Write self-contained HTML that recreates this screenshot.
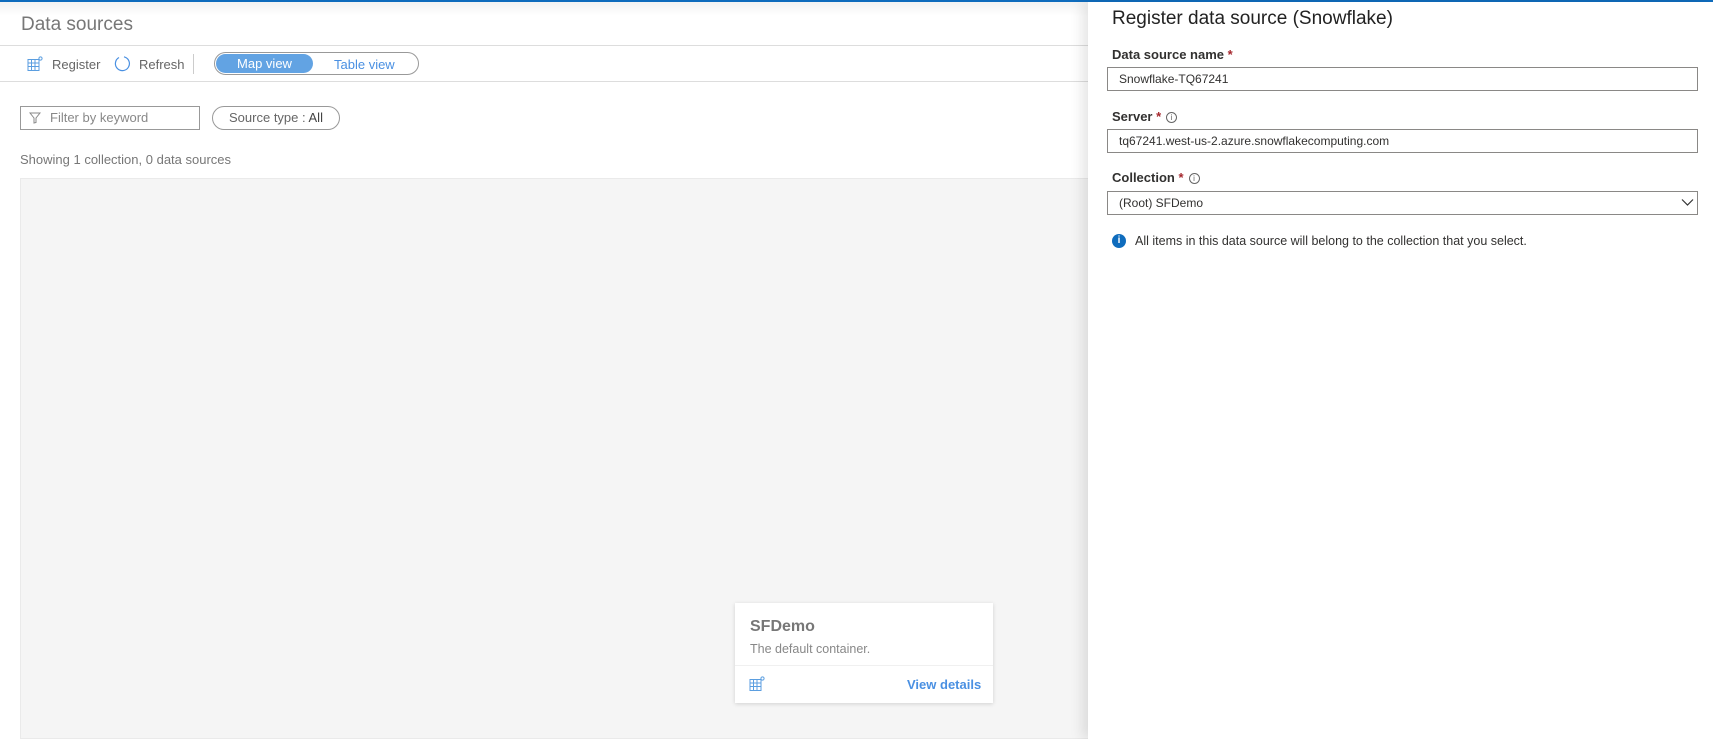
<!DOCTYPE html>
<html><head><style>
*{box-sizing:border-box;margin:0;padding:0}
body{width:1713px;height:739px;overflow:hidden;background:#fff;font-family:"Liberation Sans",sans-serif;position:relative;color:#323130}
.a{position:absolute}
.topbar{left:0;top:0;width:1713px;height:2px;background:#0f6cbd}
.hdrline{left:0;width:1088px;height:1px;background:#ddd}
.inp{border:1px solid #8a8886;height:24px;font-size:12px;padding-left:11px;line-height:22px;color:#323130;left:1107px;width:591px;background:#fff}
.lbl{left:1112px;font-size:13px;font-weight:bold;color:#323130}
.lbl b{color:#a4262c}
.inf{display:inline-block;width:11px;height:11px;border:1px solid #666;border-radius:50%;font-size:8px;line-height:9px;text-align:center;font-weight:normal;margin-left:5px;vertical-align:1px;color:#666}
</style></head><body>
<div class="a topbar"></div>
<div class="a" style="left:0;top:2px;width:1088px;height:14px;background:linear-gradient(#f3f3f3,#fff)"></div>
<div class="a" style="left:21px;top:14px;font-size:19px;color:#777">Data sources</div>
<div class="a hdrline" style="top:45px"></div>
<div class="a hdrline" style="top:81px"></div>
<svg class="a" style="left:27px;top:56px" width="16" height="16" viewBox="0 0 16 16" fill="none" stroke="#5b9ee0" stroke-width="1"><rect x="1" y="3.5" width="11" height="11"/><path d="M4.5 3.5v11M8 3.5v11M1 7h11M1 10.5h11"/><circle cx="13.5" cy="2.5" r="1.6"/></svg>
<div class="a" style="left:52px;top:57px;font-size:13px;color:#666">Register</div>
<svg class="a" style="left:114px;top:55px" width="17" height="17" viewBox="0 0 17 17"><path d="M5 2.5A7 7 0 1 0 10 1.8" fill="none" stroke="#4a90e2" stroke-width="1.2"/></svg>
<div class="a" style="left:139px;top:57px;font-size:13px;color:#666">Refresh</div>
<div class="a" style="left:193px;top:54px;width:1px;height:20px;background:#ccc"></div>
<div class="a" style="left:214px;top:52px;width:205px;height:23px;border:1px solid #999;border-radius:12px"></div>
<div class="a" style="left:216px;top:54px;width:97px;height:19px;background:#62a3e3;border-radius:10px;color:#fff;font-size:13px;text-align:center;line-height:19px">Map view</div>
<div class="a" style="left:334px;top:57px;font-size:13px;color:#4a90e2">Table view</div>
<div class="a" style="left:20px;top:106px;width:180px;height:24px;border:1px solid #999;font-size:13px;color:#888;padding-left:29px;line-height:22px">Filter by keyword</div>
<svg class="a" style="left:29px;top:112px" width="12" height="12" viewBox="0 0 12 12"><path d="M1 1h10L7 6v4.5L5 11V6z" fill="none" stroke="#888"/></svg>
<div class="a" style="left:212px;top:106px;width:128px;height:24px;border:1px solid #999;border-radius:12px;font-size:13px;color:#666;text-align:center;line-height:22px">Source type : <span style="color:#444">All</span></div>
<div class="a" style="left:20px;top:152px;font-size:13px;color:#777">Showing 1 collection, 0 data sources</div>
<div class="a" style="left:20px;top:178px;width:1080px;height:561px;background:#f5f5f5;border:1px solid #eaeaea"></div>
<div class="a" style="left:735px;top:603px;width:258px;height:100px;background:#fff;box-shadow:0 1px 4px rgba(0,0,0,.15)">
<div class="a" style="left:15px;top:15px;font-size:16px;color:#777;font-weight:bold">SFDemo</div>
<div class="a" style="left:15px;top:39px;font-size:12.5px;color:#888">The default container.</div>
<div class="a" style="left:0;top:62px;width:258px;height:1px;background:#f0f0f0"></div>
<svg class="a" style="left:14px;top:73px" width="16" height="16" viewBox="0 0 16 16" fill="none" stroke="#5b9ee0" stroke-width="1"><rect x="1" y="3.5" width="11" height="11"/><path d="M4.5 3.5v11M8 3.5v11M1 7h11M1 10.5h11"/><circle cx="13.5" cy="2.5" r="1.6"/></svg>
<div class="a" style="left:172px;top:74px;font-size:13px;color:#4a90e2;font-weight:bold">View details</div>
</div>
<div class="a" style="left:1088px;top:2px;width:625px;height:737px;background:#fff;box-shadow:-6px 0 12px rgba(0,0,0,.1)"></div>
<div class="a" style="left:1112px;top:8px;font-size:19px;color:#222">Register data source (Snowflake)</div>
<div class="a lbl" style="top:47px">Data source name <b>*</b></div>
<div class="a inp" style="top:67px">Snowflake-TQ67241</div>
<div class="a lbl" style="top:109px">Server <b>*</b><span class="inf">i</span></div>
<div class="a inp" style="top:129px">tq67241.west-us-2.azure.snowflakecomputing.com</div>
<div class="a lbl" style="top:170px">Collection <b>*</b><span class="inf">i</span></div>
<div class="a inp" style="top:191px">(Root) SFDemo</div>
<svg class="a" style="left:1681px;top:198px" width="13" height="9" viewBox="0 0 13 9"><path d="M1 1.5l5.5 5.5 5.5-5.5" fill="none" stroke="#333" stroke-width="1.2"/></svg>
<div class="a" style="left:1112px;top:234px;width:14px;height:14px;border-radius:50%;background:#0f6cbd;color:#fff;font-size:10px;font-weight:bold;text-align:center;line-height:14px">i</div>
<div class="a" style="left:1135px;top:234px;font-size:12.5px;color:#323130">All items in this data source will belong to the collection that you select.</div>
</body></html>
